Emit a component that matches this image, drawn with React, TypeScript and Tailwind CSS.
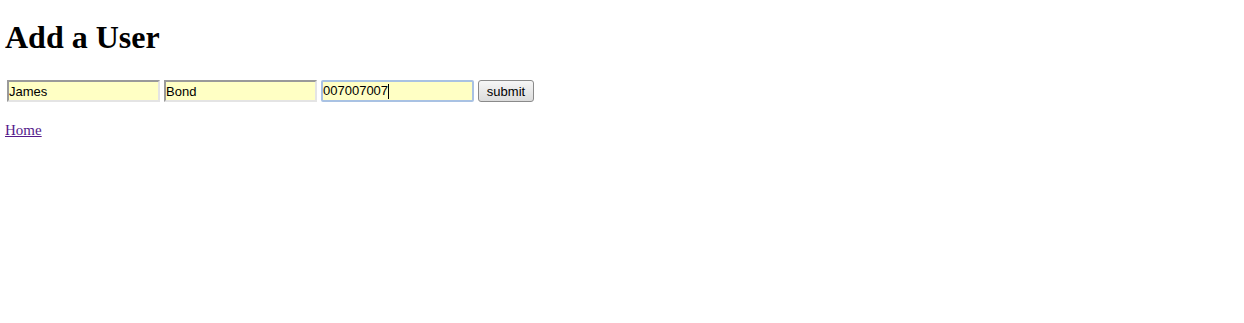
export default function App() {
  return (
    <div className="w-[1244px] h-[323px] bg-white px-[5px] pt-[1px]">
      {/* Title */}
      <h1 className="mt-[18px] mb-0 text-[32px] leading-[37px] font-bold text-black font-['Liberation_Serif',serif]">
        Add a User
      </h1>

      {/* Form row */}
      <form className="flex items-center mt-[24px] pl-[2px] gap-[4px]">
        <input
          defaultValue="James"
          className="w-[153px] h-[22px] bg-[#ffffc4] border-2 border-t-[#9a9a9a] border-l-[#9a9a9a] border-b-[#e4e4e4] border-r-[#e4e4e4] px-0 text-[13px] text-black font-['Liberation_Sans',sans-serif] outline-none"
        />
        <input
          defaultValue="Bond"
          className="w-[153px] h-[22px] bg-[#ffffc4] border-2 border-t-[#9a9a9a] border-l-[#9a9a9a] border-b-[#e4e4e4] border-r-[#e4e4e4] px-0 text-[13px] text-black font-['Liberation_Sans',sans-serif] outline-none"
        />
        <div className="w-[153px] h-[22px] bg-[#ffffc4] border-2 border-[#a9c2e3] rounded-[2px] px-0 flex items-center text-[13px] text-black font-['Liberation_Sans',sans-serif]">
          <span>007007007</span>
          <span className="w-px h-[15px] bg-black" />
        </div>
        <button
          type="button"
          className="w-[56px] h-[22px] flex items-center justify-center border border-[#8a8a8a] rounded-[3px] bg-gradient-to-b from-[#f6f6f6] to-[#dcdcdc] text-[13px] text-black font-['Liberation_Sans',sans-serif] leading-none"
        >
          submit
        </button>
      </form>

      {/* Link */}
      <div className="mt-[15px]">
        <a href="#" className="text-[15px] text-[#551a8b] underline font-['Liberation_Serif',serif]">
          Home
        </a>
      </div>
    </div>
  )
}
